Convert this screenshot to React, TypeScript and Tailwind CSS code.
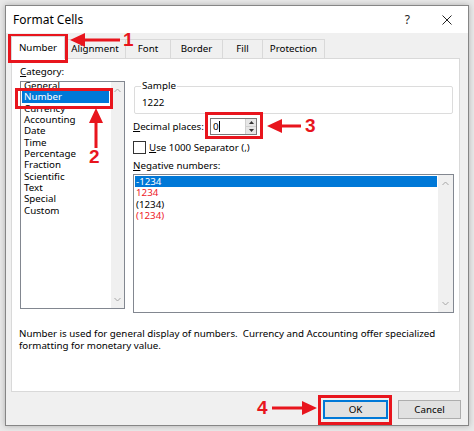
import React from 'react';

const categories = [
  'General',
  'Number',
  'Currency',
  'Accounting',
  'Date',
  'Time',
  'Percentage',
  'Fraction',
  'Scientific',
  'Text',
  'Special',
  'Custom',
];

const negatives = [
  { text: '-1234', red: false, selected: true },
  { text: '1234', red: true, selected: false },
  { text: '(1234)', red: false, selected: false },
  { text: '(1234)', red: true, selected: false },
];

const tabs = [
  { label: 'Number', w: 'w-[54px]', active: true },
  { label: 'Alignment', w: 'w-[61px]', active: false },
  { label: 'Font', w: 'w-[45px]', active: false },
  { label: 'Border', w: 'w-[52px]', active: false },
  { label: 'Fill', w: 'w-[40px]', active: false },
  { label: 'Protection', w: 'w-[62px]', active: false },
];

function Chevron({ down = false }: { down?: boolean }) {
  return (
    <svg width="7" height="5" viewBox="0 0 7 5" className="block">
      <path
        d={down ? 'M0.5 1 L3.5 4 L6.5 1' : 'M0.5 4 L3.5 1 L6.5 4'}
        fill="none"
        stroke="#a6a6a6"
        strokeWidth="1"
      />
    </svg>
  );
}

function ScrollTrack({ w }: { w: string }) {
  return (
    <div className={`${w} bg-[#f0f0f0] flex flex-col items-center justify-between py-[6px]`}>
      <Chevron />
      <Chevron down />
    </div>
  );
}

// red annotation arrow, drawn pointing left and rotated where needed
function Arrow({ className, length, rotate = '' }: { className: string; length: number; rotate?: string }) {
  return (
    <svg width={length} height="16" viewBox={`0 0 ${length} 16`} className={`absolute ${className} ${rotate}`}>
      <path d={`M0 8 L15 1 L15 15 Z`} fill="#e8151d" />
      <rect x="13" y="6.5" width={length - 13} height="3" fill="#e8151d" />
    </svg>
  );
}

export default function App() {
  return (
    <div className="w-[474px] h-[431px] bg-[#e9e9e9] pl-[5px] pt-[5px] relative overflow-hidden font-['Noto_Sans',sans-serif] text-[9.75px] text-black">
      <div className="w-[464px] h-[421px] bg-[#f0f0f0] border border-[#868686] shadow-[0_0_6px_rgba(0,0,0,0.25)] flex flex-col">
        {/* title bar */}
        <div className="h-[27px] bg-white flex items-center pl-[7px] pr-[16px] shrink-0">
          <span className="text-[12px] leading-none">Format Cells</span>
          <span className="ml-auto text-[12px] leading-none text-[#222]">?</span>
          <svg width="10" height="10" viewBox="0 0 10 10" className="ml-[32px]">
            <path d="M0.5 0.5 L9.5 9.5 M9.5 0.5 L0.5 9.5" stroke="#222" strokeWidth="1" />
          </svg>
        </div>

        {/* tabs */}
        <div className="h-[25px] flex items-end pl-[5px] shrink-0">
          {tabs.map((t) =>
            t.active ? (
              <div
                key={t.label}
                className={`${t.w} h-[23px] -mb-px relative z-10 bg-white border border-b-0 border-[#d9d9d9] flex items-center justify-center`}
              >
                {t.label}
              </div>
            ) : (
              <div
                key={t.label}
                className={`${t.w} h-[19px] border border-b-0 border-l-0 border-[#d9d9d9] flex items-center justify-center`}
              >
                {t.label}
              </div>
            )
          )}
        </div>

        {/* panel */}
        <div className="w-[449px] h-[334px] ml-[5px] bg-white border border-[#d9d9d9] flex flex-col shrink-0">
          <div className="flex gap-[8px] pl-[8px]">
            {/* category column */}
            <div className="flex flex-col pt-[7px] w-[105px]">
              <div className="leading-[12px] h-[15px]">
                <u>C</u>ategory:
              </div>
              <div className="h-[228px] border border-[#828790] flex overflow-hidden">
                <div className="flex-1 overflow-hidden pl-[1px] pr-[2px]">
                  <div className="-mt-[2px]">
                    {categories.map((c) => (
                      <div
                        key={c}
                        className={`leading-[11.35px] h-[11.35px] pl-[2px] ${
                          c === 'Number' ? 'bg-[#0078d7] text-white' : ''
                        }`}
                      >
                        {c}
                      </div>
                    ))}
                  </div>
                </div>
                <ScrollTrack w="w-[13px]" />
              </div>
            </div>

            {/* right column */}
            <div className="flex flex-col pt-[21px] w-[321px]">
              <fieldset className="border border-[#dcdcdc] rounded-[2px] pl-[6px] pb-[4px] mr-[1px] ml-[1px]">
                <legend className="px-[1px] leading-[12px]">Sample</legend>
                <div className="leading-[12px] pt-[5px] pl-[1px]">1222</div>
              </fieldset>

              <div className="flex items-center mt-[4px] h-[17px]">
                <span className="leading-[12px] w-[77px]">
                  <u>D</u>ecimal places:
                </span>
                <div className="w-[47px] h-[17px] border border-[#7a7a7a] bg-white flex">
                  <div className="flex-1 flex items-center pl-[2px] leading-none">
                    0<span className="w-px h-[11px] bg-black" />
                  </div>
                  <div className="w-[11px] flex flex-col border-l border-[#cfcfcf]">
                    <div className="flex-1 bg-[#e6e6e6] border-b border-[#cfcfcf] flex items-center justify-center">
                      <svg width="5" height="3" viewBox="0 0 5 3">
                        <path d="M0 3 L2.5 0 L5 3 Z" fill="#333" />
                      </svg>
                    </div>
                    <div className="flex-1 bg-[#e6e6e6] flex items-center justify-center">
                      <svg width="5" height="3" viewBox="0 0 5 3">
                        <path d="M0 0 L2.5 3 L5 0 Z" fill="#333" />
                      </svg>
                    </div>
                  </div>
                </div>
              </div>

              <div className="flex items-center mt-[6px] h-[13px]">
                <div className="w-[13px] h-[13px] border border-[#333] bg-white" />
                <span className="ml-[3px] leading-[12px]">
                  <u>U</u>se 1000 Separator (,)
                </span>
              </div>

              <div className="mt-[6px] leading-[12px] h-[14px]">
                <u>N</u>egative numbers:
              </div>
              <div className="h-[139px] border border-[#828790] flex">
                <div className="flex-1 pt-[1px] pl-[1px] pr-[1px]">
                  {negatives.map((n, i) => (
                    <div
                      key={i}
                      className={`leading-[11.35px] h-[11.35px] pl-[1px] ${
                        n.selected ? 'bg-[#0078d7] text-white' : n.red ? 'text-[#ee2028]' : ''
                      }`}
                    >
                      {n.text}
                    </div>
                  ))}
                </div>
                <ScrollTrack w="w-[15px]" />
              </div>
            </div>
          </div>

          <p className="pl-[7px] mt-[15px] leading-[12px]">
            Number is used for general display of numbers.&nbsp; Currency and Accounting offer specialized
            <br />
            formatting for monetary value.
          </p>
        </div>

        {/* buttons */}
        <div className="flex justify-end gap-[10px] pt-[8px] w-[455px]">
          <button className="w-[65px] h-[19px] bg-[#e1e1e1] border-2 border-[#0078d7] leading-none">OK</button>
          <button className="w-[63px] h-[19px] bg-[#e1e1e1] border border-[#adadad] leading-none">Cancel</button>
        </div>
      </div>

      {/* annotations */}
      <div className="absolute left-[8px] top-[34px] w-[60px] h-[29px] border-[3px] border-[#e8151d]" />
      <Arrow className="left-[70px] top-[32px]" length={50} />
      <div className="absolute left-[123px] top-[29px] text-[19px] font-bold leading-[22px] text-[#e8151d] font-['Liberation_Sans',sans-serif]">
        1
      </div>

      <div className="absolute left-[15px] top-[88px] w-[98px] h-[21px] border-[3px] border-[#e8151d]" />
      <Arrow className="left-[76px] top-[120px]" length={40} rotate="rotate-90" />
      <div className="absolute left-[89px] top-[146px] text-[19px] font-bold leading-[22px] text-[#e8151d] font-['Liberation_Sans',sans-serif]">
        2
      </div>

      <div className="absolute left-[205px] top-[112px] w-[58px] h-[27px] border-[3px] border-[#e8151d]" />
      <Arrow className="left-[267px] top-[118px]" length={34} />
      <div className="absolute left-[305px] top-[115px] text-[19px] font-bold leading-[22px] text-[#e8151d] font-['Liberation_Sans',sans-serif]">
        3
      </div>

      <div className="absolute left-[318px] top-[395px] w-[74px] h-[30px] border-[3px] border-[#e8151d]" />
      <Arrow className="left-[272px] top-[400px]" length={45} rotate="rotate-180" />
      <div className="absolute left-[257px] top-[397px] text-[19px] font-bold leading-[22px] text-[#e8151d] font-['Liberation_Sans',sans-serif]">
        4
      </div>
    </div>
  );
}
